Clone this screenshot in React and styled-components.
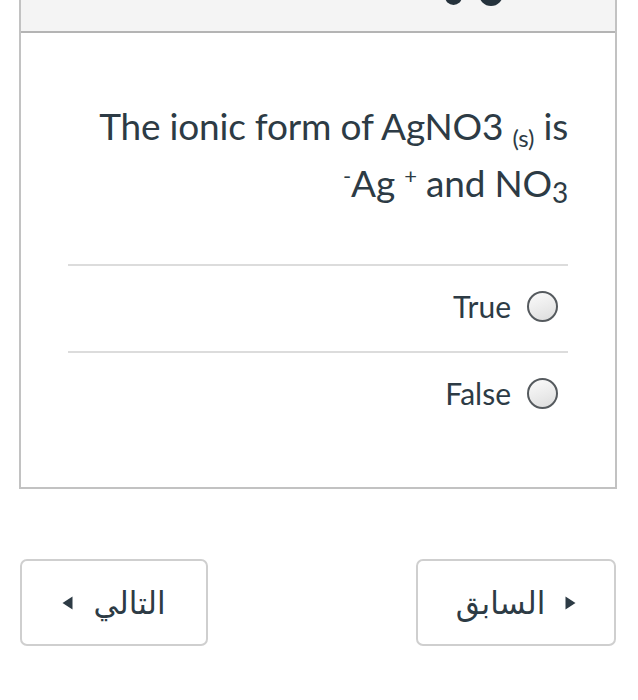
import React from "react";
import styled, { createGlobalStyle } from "styled-components";

const Global = createGlobalStyle`
  html, body { margin: 0; padding: 0; background: #fff; }
  body {
    font-family: Lato, "DejaVu Sans", sans-serif;
    color: #2d3b45;
    direction: rtl;
    overflow: hidden;
  }
`;

const Page = styled.div`
  width: 638px;
  height: 700px;
  overflow: hidden;
`;

const QuestionBox = styled.section`
  margin: -40px 21px 0 19px;
  border: 2px solid #c2c2c2;
  background: #fff;
`;

const Header = styled.div`
  box-sizing: border-box;
  height: 71px;
  background: #f4f4f4;
  border-bottom: 2px solid #b4b4b4;
  display: flex;
  align-items: flex-end;
  gap: 17px;
  padding: 0 112px 25px 0;
`;

const Dot = styled.span`
  display: block;
  width: ${(p) => p.$size}px;
  height: ${(p) => p.$size}px;
  border-radius: 50%;
  background: #25323c;
  margin-bottom: ${(p) => p.$drop || 0}px;
`;

const Body = styled.div`
  padding: 64px 47px 49px 47px;
`;

const QuestionText = styled.p`
  margin: 0 0 53px;
  direction: ltr;
  text-align: right;
  font-size: 37px;
  line-height: 57px;
  font-weight: 400;
  letter-spacing: -0.2px;
`;

const Sub = styled.sub`
  font-size: ${(p) => p.$size}px;
  vertical-align: ${(p) => p.$shift}px;
  line-height: 0;
`;

const Sup = styled.sup`
  font-size: 22px;
  vertical-align: 13px;
  line-height: 0;
`;

const Answers = styled.div`
  display: flex;
  flex-direction: column;
`;

const AnswerRow = styled.label`
  box-sizing: border-box;
  height: 87px;
  border-top: 2px solid #dcdcdc;
  display: flex;
  align-items: center;
  gap: 16px;
  padding: 0 10px 4px 0;
`;

const Radio = styled.span`
  display: block;
  width: 27px;
  height: 27px;
  border-radius: 50%;
  border: 2px solid #555a5e;
  background: linear-gradient(160deg, #fbfbfb 0%, #e9e9e9 60%, #dcdcdc 100%);
`;

const AnswerLabel = styled.span`
  font-size: 30px;
  line-height: 1;
  margin-top: -2px;
`;

const Nav = styled.nav`
  display: flex;
  justify-content: space-between;
  margin: 70px 22px 0 20px;
`;

const NavButton = styled.button`
  width: ${(p) => p.$w}px;
  height: 87px;
  border: 2px solid #cfcfcf;
  border-radius: 7px;
  background: #fff;
  color: #2d3b45;
  font-family: "DejaVu Sans", Lato, sans-serif;
  font-size: 31px;
  display: flex;
  align-items: center;
  justify-content: center;
  gap: 20px;
  padding: 0;
  direction: rtl;
`;

const Arrow = ({ dir }) => (
  <svg width="11" height="14" viewBox="0 0 11 14">
    {dir === "right" ? (
      <path d="M0.5 0.5 L10.5 7 L0.5 13.5 Z" fill="#2d3b45" />
    ) : (
      <path d="M10.5 0.5 L0.5 7 L10.5 13.5 Z" fill="#2d3b45" />
    )}
  </svg>
);

export default function App() {
  return (
    <Page>
      <Global />
      <QuestionBox>
        <Header>
          <Dot $size={24} />
          <Dot $size={17} $drop={1} />
        </Header>
        <Body>
          <QuestionText>
            The ionic form of AgNO3 <Sub $size={24} $shift={-7}>(s)</Sub> is
            <br />
            <Sup>-</Sup>Ag <Sup>+</Sup> and NO<Sub $size={28} $shift={-6}>3</Sub>
          </QuestionText>
          <Answers>
            <AnswerRow>
              <Radio />
              <AnswerLabel>True</AnswerLabel>
            </AnswerRow>
            <AnswerRow>
              <Radio />
              <AnswerLabel>False</AnswerLabel>
            </AnswerRow>
          </Answers>
        </Body>
      </QuestionBox>
      <Nav>
        <NavButton $w={200}>
          <Arrow dir="right" />
          <span>السابق</span>
        </NavButton>
        <NavButton $w={188}>
          <span>التالي</span>
          <Arrow dir="left" />
        </NavButton>
      </Nav>
    </Page>
  );
}
